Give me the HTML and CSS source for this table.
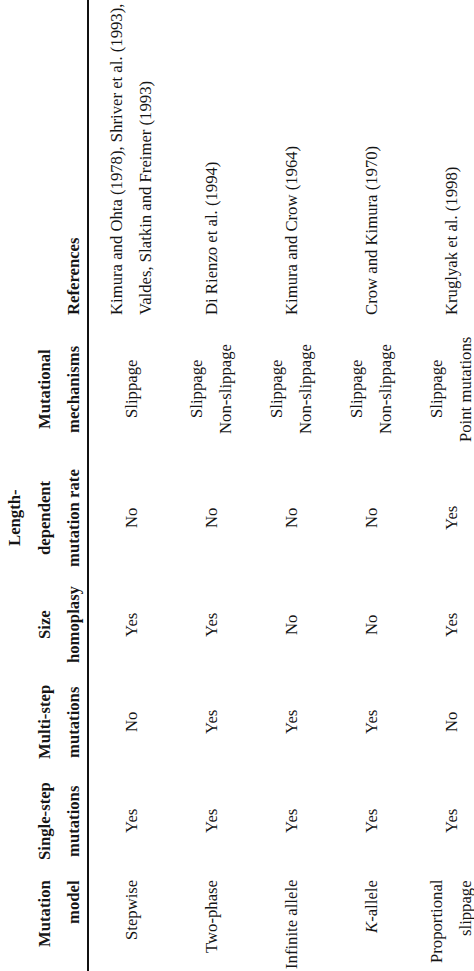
FILE: index.html
```html
<!DOCTYPE html>
<html lang="en">
<head>
<meta charset="utf-8">
<title>Mutation models</title>
<link rel="stylesheet" href="styles.css">
</head>
<body>
<div class="page">
  <div class="row head">
    <div class="c c1">Mutation<br>model</div>
    <div class="c">Single-step<br>mutations</div>
    <div class="c">Multi-step<br>mutations</div>
    <div class="c">Size<br>homoplasy</div>
    <div class="c">Length-<br>dependent<br>mutation rate</div>
    <div class="c">Mutational<br>mechanisms</div>
    <div class="c c7">References</div>
  </div>
  <div class="tbody">
    <div class="row rec">
      <div class="c c1">Stepwise</div>
      <div class="c">Yes</div>
      <div class="c">No</div>
      <div class="c">Yes</div>
      <div class="c">No</div>
      <div class="c">Slippage</div>
      <div class="c c7">Kimura and Ohta (1978), Shriver et al. (1993),<br>Valdes, Slatkin and Freimer (1993)</div>
    </div>
    <div class="row rec">
      <div class="c c1">Two-phase</div>
      <div class="c">Yes</div>
      <div class="c">Yes</div>
      <div class="c">Yes</div>
      <div class="c">No</div>
      <div class="c">Slippage<br>Non-slippage</div>
      <div class="c c7">Di Rienzo et al. (1994)</div>
    </div>
    <div class="row rec">
      <div class="c c1">Infinite allele</div>
      <div class="c">Yes</div>
      <div class="c">Yes</div>
      <div class="c">No</div>
      <div class="c">No</div>
      <div class="c">Slippage<br>Non-slippage</div>
      <div class="c c7">Kimura and Crow (1964)</div>
    </div>
    <div class="row rec">
      <div class="c c1"><i>K</i>-allele</div>
      <div class="c">Yes</div>
      <div class="c">Yes</div>
      <div class="c">No</div>
      <div class="c">No</div>
      <div class="c">Slippage<br>Non-slippage</div>
      <div class="c c7">Crow and Kimura (1970)</div>
    </div>
    <div class="row rec">
      <div class="c c1">Proportional<br>slippage</div>
      <div class="c">Yes</div>
      <div class="c">No</div>
      <div class="c">Yes</div>
      <div class="c">Yes</div>
      <div class="c">Slippage<br>Point mutations</div>
      <div class="c c7">Kruglyak et al. (1998)</div>
    </div>
  </div>
</div>
</body>
</html>
```

FILE: styles.css
```css
* {
  box-sizing: border-box;
}

html,
body {
  margin: 0;
  padding: 0;
  overflow: hidden;
  background: #ffffff;
}

.page {
  width: 474px;
  height: 971px;
  overflow: hidden;
  writing-mode: vertical-rl;
  transform: rotate(180deg);
  font-family: "Liberation Serif", "Times New Roman", serif;
  font-size: 16.7px;
  color: #151515;
}

.row {
  display: grid;
  grid-template-columns: 100px 100px 98px 96px 118px 140px 319px;
}

.head {
  block-size: 89px;
  border-block-end: 2px solid #111111;
  font-weight: bold;
  line-height: 29.5px;
}

.head > .c {
  align-self: end;
  padding-block-end: 5px;
}

.tbody {
  margin-block-start: 2px;
}

.rec {
  block-size: 80px;
  line-height: 29px;
}

.rec > .c {
  align-self: center;
}

.c {
  text-align: center;
  white-space: nowrap;
}

.c1 {
  text-align: end;
  padding-inline-end: 9px;
}

.c7 {
  text-align: start;
  padding-inline-start: 4px;
}
```
